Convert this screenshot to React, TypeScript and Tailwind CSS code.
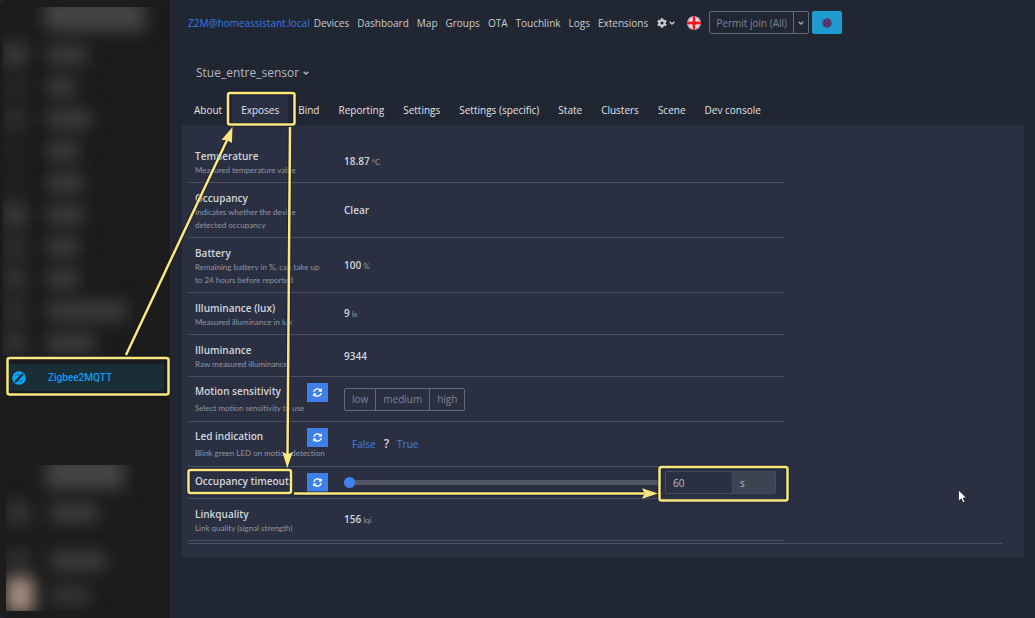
import React, { useState } from "react";
import { FaCog, FaSyncAlt } from "react-icons/fa";

const navLinks = ["Devices", "Dashboard", "Map", "Groups", "OTA", "Touchlink", "Logs", "Extensions"];
const tabs = ["About", "Exposes", "Bind", "Reporting", "Settings", "Settings (specific)", "State", "Clusters", "Scene", "Dev console"];

function Caret() {
  return (
    <svg viewBox="0 0 6 4" className="h-1 w-1.5 shrink-0" fill="none" stroke="currentColor" strokeWidth="1.3" aria-hidden="true">
      <path d="M.6.7 3 3 5.4.7" />
    </svg>
  );
}

function ZigbeeIcon() {
  return (
    <svg viewBox="0 0 14 14" className="size-3.5 shrink-0" aria-hidden="true">
      <circle cx="7" cy="7" r="6.8" fill="#0ea5f5" />
      <path d="M3 4.200c2-.3 3.500-.3 6-.2M11 9.800c-2 .3-3.500.3-6 .2" fill="none" stroke="#16303b" strokeWidth=".5" />
      <path d="M3 11 11 3" fill="none" stroke="#16303b" strokeWidth="2.100" />
    </svg>
  );
}

function FlagIcon() {
  return (
    <svg viewBox="0 0 14 14" className="size-3.5 shrink-0" aria-hidden="true">
      <clipPath id="flag-disc"><circle cx="7" cy="7" r="7" /></clipPath>
      <g clipPath="url(#flag-disc)">
        <path d="M0 0h14v14H0z" fill="#24479c" />
        <path d="M0 0 14 14M14 0 0 14" stroke="#fff" strokeWidth="3" />
        <path d="M0 0 14 14M14 0 0 14" stroke="#e8232b" strokeWidth=".7" />
        <path d="M7 0v14M0 7h14" stroke="#fff" strokeWidth="5" />
        <path d="M7 0v14M0 7h14" stroke="#f0141e" strokeWidth="2.800" />
      </g>
    </svg>
  );
}

function Blur({ className }: { className: string }) {
  return <span className={"block shrink-0 rounded-sm blur-[8px] " + className} />;
}

function HiddenRow({ width, icon = "bg-[#343434]" }: { width: string; icon?: string }) {
  return (
    <div className="flex h-8 items-center gap-5">
      <Blur className={"h-6 w-6 " + icon} />
      <Blur className={"h-5 bg-[#3c3c3c] " + width} />
    </div>
  );
}

function Sidebar() {
  return (
    <aside className="flex w-[171px] shrink-0 flex-col overflow-hidden rounded-l-md border-r border-[#2b2b2b] bg-[#1c1c1c] font-['Roboto',sans-serif]">
      <div className="mt-[7px] ml-[3px] h-[349px] overflow-hidden" aria-hidden="true">
        <div className="flex h-8 items-start pl-[42px]">
          <Blur className="-mt-2 h-8 w-[100px] bg-[#454545]" />
        </div>
        <HiddenRow width="w-10" icon="bg-[#3c3c3c]" />
        <HiddenRow width="w-7" icon="bg-[#282828]" />
        <HiddenRow width="w-11" icon="bg-[#2e2e2e]" />
        <HiddenRow width="w-8" icon="bg-[#222222]" />
        <HiddenRow width="w-9" icon="bg-[#222222]" />
        <HiddenRow width="w-9" icon="bg-[#3c3c3c]" />
        <HiddenRow width="w-8" icon="bg-[#303030]" />
        <HiddenRow width="w-8" />
        <HiddenRow width="w-20" icon="bg-[#303030]" />
        <HiddenRow width="w-12" />
      </div>
      <a href="#zigbee2mqtt" className="mx-1.5 mt-2 flex h-[27px] items-center gap-[22px] bg-[#1a2e38] pl-1.5 text-[10px] font-medium text-[#129cf0]">
        <ZigbeeIcon />
        Zigbee2MQTT
      </a>
      <div className="mt-[74px] ml-1.5 h-[146px] overflow-hidden" aria-hidden="true">
        <div className="flex h-8 items-start pl-10">
          <Blur className="-mt-2 h-8 w-[78px] bg-[#454545]" />
        </div>
        <HiddenRow width="w-12" />
        <div className="h-4" />
        <HiddenRow width="w-14" icon="bg-[#303030]" />
        <div className="flex h-9 items-center gap-4">
          <Blur className="h-9 w-7 bg-[#a48d80]" />
          <Blur className="h-5 w-10 bg-[#343434]" />
        </div>
      </div>
    </aside>
  );
}

function Header() {
  return (
    <header className="flex items-center gap-2 pt-[11px] pl-1.5 text-[10px] leading-4 text-[#c9ccd1]">
      <a href="#home" className="-mr-1 text-[#3b7be8]">Z2M@homeassistant.local</a>
      {navLinks.map((l) => (
        <a key={l} href={"#" + l.toLowerCase()}>{l}</a>
      ))}
      <button type="button" aria-label="Settings menu" className="ml-px flex items-center gap-0.5">
        <FaCog className="size-2.5" />
        <Caret />
      </button>
      <button type="button" aria-label="Language" className="ml-1">
        <FlagIcon />
      </button>
      <div className="flex h-[23px] shrink-0 items-stretch rounded-xs border border-[#636a78] text-[#7d8492]">
        <button type="button" className="px-1.5">Permit join (All)</button>
        <button type="button" aria-label="Choose device" className="flex w-[15px] items-center justify-center border-l border-[#636a78] text-[#a3a8b0]">
          <Caret />
        </button>
      </div>
      <button type="button" aria-label="Toggle theme" className="-ml-[5px] flex h-[23px] w-[30px] shrink-0 items-center justify-center rounded-xs bg-[#1e9bd1]">
        <svg viewBox="0 0 10 10" className="size-2.5" aria-hidden="true">
          <circle cx="5" cy="5" r="4.800" fill="#5b3d76" />
          <g fill="#3a2552">
            <circle cx="3" cy="3.500" r=".8" /><circle cx="6.500" cy="2.700" r=".8" /><circle cx="5" cy="5.500" r=".8" />
            <circle cx="7.500" cy="6" r=".8" /><circle cx="3" cy="7" r=".8" /><circle cx="5.800" cy="8" r=".7" />
          </g>
        </svg>
      </button>
    </header>
  );
}

type RowProps = { name: string; text?: string; refresh?: boolean; id?: string; children: React.ReactNode };

function Row({ name, text, refresh, id, children }: RowProps) {
  return (
    <div className="grid grid-cols-[156px_1fr] border-b border-[#4a5060]">
      <div className={refresh ? "py-1.5 pl-[7px]" : "pt-[7px] pb-[5px] pl-[7px]"}>
        <div className="flex items-start justify-between pr-4">
          {id ? (
            <label htmlFor={id} className="text-[10px] leading-4 font-semibold text-[#d3d6da]">{name}</label>
          ) : (
            <h3 className="text-[10px] leading-4 font-semibold text-[#d3d6da]">{name}</h3>
          )}
          {refresh && (
            <button type="button" aria-label={"Refresh " + name} className="flex h-[19px] w-[21px] items-center justify-center bg-[#3f7fe8] text-white">
              <FaSyncAlt className="size-[9px]" />
            </button>
          )}
        </div>
        {text && <p className="w-[131px] font-['Lato',sans-serif] text-[8px] leading-[13px] text-[#9096a3]">{text}</p>}
      </div>
      <div className="flex items-center pr-2 text-[10px] leading-4 text-[#d3d6da]">{children}</div>
    </div>
  );
}

function Value({ value, unit }: { value: string; unit?: string }) {
  return (
    <p>
      <strong className="font-semibold">{value}</strong>
      {unit && <small className="ml-0.5 font-['Lato',sans-serif] text-[8px] text-[#9096a3]">{unit}</small>}
    </p>
  );
}

function Timeout() {
  const [seconds, setSeconds] = useState(60);
  return (
    <>
      <input
        id="timeout"
        type="range"
        min={60}
        max={3600}
        value={seconds}
        onChange={(e) => setSeconds(Number(e.target.value))}
        className="h-[5px] min-w-0 flex-1 appearance-none rounded-full bg-[#525765] [&::-webkit-slider-thumb]:size-[11px] [&::-webkit-slider-thumb]:appearance-none [&::-webkit-slider-thumb]:rounded-full [&::-webkit-slider-thumb]:bg-[#3f83f0]"
      />
      <div className="ml-1 flex h-[23px] w-[111px] rounded-xs border border-[#464c5b]">
        <input
          aria-label="Timeout in seconds"
          value={seconds}
          onChange={(e) => setSeconds(Number(e.target.value) || 0)}
          className="w-[66px] bg-transparent px-[7px] text-[#b9bdc5]"
        />
        <span className="flex flex-1 items-center border-l border-[#464c5b] bg-[#3d4352] pl-[7px] text-[#b9bdc5]">s</span>
      </div>
    </>
  );
}

function Annotations() {
  const shapes = (
    <>
      <rect x="7.500" y="358" width="161" height="36.500" rx="2" />
      <rect x="228" y="93" width="66.500" height="31.500" rx="2" />
      <rect x="188.500" y="470" width="102.500" height="23" rx="2" />
      <rect x="659.500" y="467" width="128" height="33.500" rx="2" />
      <path d="M126 355 228 138M290 127l-2.500 328M294 493.500h350" />
    </>
  );
  return (
    <svg className="pointer-events-none absolute top-0 left-0 h-[618px] w-[1035px]" viewBox="0 0 1035 618" fill="none" aria-hidden="true">
      <g stroke="#12162c" strokeOpacity=".55" strokeWidth="4.500">{shapes}</g>
      <g stroke="#fce77d" strokeWidth="2.500">{shapes}</g>
      <g fill="#fce77d">
        <path d="m232.500 127-.6 16-4.900-3-5.500.1z" />
        <path d="m287.300 468-4.900-16 5.100 2.500 5.200-2.400z" />
        <path d="m658 493.500-16 5.200 2.500-5.200-2.500-5.200z" />
      </g>
      <path d="M958.500 490v11.200l2.700-2.400 1.800 3.900 1.900-.9-1.800-3.800h3.500z" fill="#fff" stroke="#111" strokeWidth=".7" />
    </svg>
  );
}

export default function App() {
  return (
    <div className="relative flex min-h-screen overflow-hidden bg-[#212633] font-['Open_Sans','Noto_Sans',sans-serif]">
      <Sidebar />
      <div className="min-w-0 flex-1 pr-[11px] pl-[11px] whitespace-nowrap">
        <Header />
        <button type="button" className="mt-[30px] ml-3.5 flex items-center gap-1 text-[12px] leading-[18px] text-[#b4b9c1]">
          Stue_entre_sensor
          <Caret />
        </button>
        <nav className="mt-3 flex gap-px pl-[3px] text-[10px] leading-4 text-[#e1e3e6]">
          {tabs.map((t) => (
            <a key={t} href={"#" + t} className={t === "Exposes" ? "bg-[#2a3042] px-[9px] pt-2 pb-[7px]" : "px-[9px] pt-2 pb-[7px]"}>{t}</a>
          ))}
        </nav>
        <main className="rounded-b-xs bg-[#2a3042] px-1.5 pt-4 pb-[13px] whitespace-normal">
          <div className="max-w-[596px]">
            <Row name="Temperature" text="Measured temperature value"><Value value="18.87" unit="°C" /></Row>
            <Row name="Occupancy" text="Indicates whether the device detected occupancy"><Value value="Clear" /></Row>
            <Row name="Battery" text="Remaining battery in %, can take up to 24 hours before reported"><Value value="100" unit="%" /></Row>
            <Row name="Illuminance (lux)" text="Measured illuminance in lux"><Value value="9" unit="lx" /></Row>
            <Row name="Illuminance" text="Raw measured illuminance"><Value value="9344" /></Row>
            <Row name="Motion sensitivity" text="Select motion sensitivity to use" refresh>
              <div className="flex h-[23px] divide-x divide-[#636a78] rounded-xs border border-[#636a78] text-[#7d8492]">
                <button type="button" className="px-[7px]">low</button>
                <button type="button" className="px-[7px]">medium</button>
                <button type="button" className="px-[7px]">high</button>
              </div>
            </Row>
            <Row name="Led indication" text="Blink green LED on motion detection" refresh>
              <div className="flex items-center gap-2 pl-2 text-[#3f7fe8]">
                <button type="button">False</button>
                <span className="text-[12px] font-semibold text-[#d3d6da]">?</span>
                <button type="button">True</button>
              </div>
            </Row>
            <Row name="Occupancy timeout" id="timeout" refresh><Timeout /></Row>
            <Row name="Linkquality" text="Link quality (signal strength)"><Value value="156" unit="lqi" /></Row>
          </div>
          <hr className="mt-0.5 mr-4 border-[#4a5060]" />
        </main>
      </div>
      <Annotations />
    </div>
  );
}
